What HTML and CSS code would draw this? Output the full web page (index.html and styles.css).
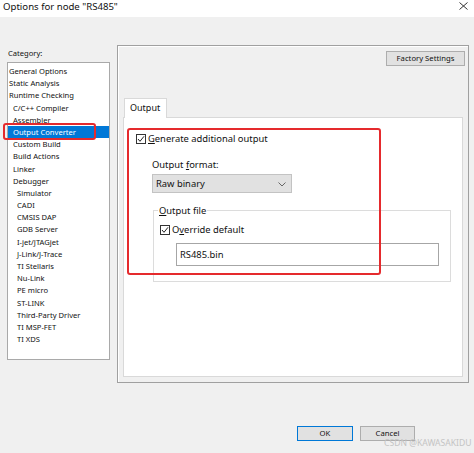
FILE: index.html
```html
<!DOCTYPE html>
<html>
<head>
<meta charset="utf-8">
<link rel="stylesheet" href="styles.css">
</head>
<body>
<div class="window">
  <div class="titlebar">
    <span class="title">Options for node "RS485"</span>
    <svg class="close" width="9" height="8" viewBox="0 0 9 8"><path d="M0.5 0.5 L8.5 7.5 M8.5 0.5 L0.5 7.5" stroke="#333" stroke-width="1" fill="none"/></svg>
  </div>
  <div class="dialog">
    <div class="main">
      <div class="left">
        <div class="cat-label">Category:</div>
        <div class="list">
          <div class="item l0">General Options</div>
          <div class="item l0">Static Analysis</div>
          <div class="item l0">Runtime Checking</div>
          <div class="item l1">C/C++ Compiler</div>
          <div class="item l1">Assembler</div>
          <div class="item l1 sel">Output Converter</div>
          <div class="item l1">Custom Build</div>
          <div class="item l1">Build Actions</div>
          <div class="item l1">Linker</div>
          <div class="item l1">Debugger</div>
          <div class="item l2">Simulator</div>
          <div class="item l2">CADI</div>
          <div class="item l2">CMSIS DAP</div>
          <div class="item l2">GDB Server</div>
          <div class="item l2">I-jet/JTAGjet</div>
          <div class="item l2">J-Link/J-Trace</div>
          <div class="item l2">TI Stellaris</div>
          <div class="item l2">Nu-Link</div>
          <div class="item l2">PE micro</div>
          <div class="item l2">ST-LINK</div>
          <div class="item l2">Third-Party Driver</div>
          <div class="item l2">TI MSP-FET</div>
          <div class="item l2">TI XDS</div>
          <div class="mark mark-list"></div>
        </div>
      </div>
      <div class="right">
        <div class="btn factory">Factory Settings</div>
        <div class="tabs">
          <div class="tab">Output</div>
        </div>
        <div class="tabpanel">
          <div class="check-row first">
            <svg class="cb" width="10" height="10" viewBox="0 0 10 10"><rect x="0.5" y="0.5" width="9" height="9" fill="#fff" stroke="#333"/><path d="M2 5 L4 7.3 L8 2.3" stroke="#222" stroke-width="1" fill="none"/></svg>
            <span><u>G</u>enerate additional output</span>
          </div>
          <div class="field-label">Output <u>f</u>ormat:</div>
          <div class="select">
            <span>Raw binary</span>
            <svg class="chev" width="8" height="5" viewBox="0 0 8 5"><path d="M0.5 0.5 L4 4 L7.5 0.5" stroke="#666" stroke-width="1" fill="none"/></svg>
          </div>
          <fieldset class="group">
            <legend><u>O</u>utput file</legend>
            <div class="check-row second">
              <svg class="cb" width="10" height="10" viewBox="0 0 10 10"><rect x="0.5" y="0.5" width="9" height="9" fill="#fff" stroke="#333"/><path d="M2 5 L4 7.3 L8 2.3" stroke="#222" stroke-width="1" fill="none"/></svg>
              <span>O<u>v</u>erride default</span>
            </div>
            <div class="textbox">RS485.bin</div>
          </fieldset>
          <div class="mark mark-panel"></div>
        </div>
      </div>
    </div>
    <div class="footer">
      <div class="btn ok">OK</div>
      <div class="btn cancel">Cancel</div>
    </div>
  </div>
  <div class="watermark">CSDN @KAWASAKIDU</div>
</div>
</body>
</html>
```

FILE: styles.css
```css
* { box-sizing: border-box; }
html, body { margin: 0; padding: 0; }
body {
  width: 474px;
  height: 453px;
  overflow: hidden;
  font-family: "Noto Sans", "Liberation Sans", sans-serif;
  color: #000;
  background: #fff;
}
.window {
  position: relative;
  width: 474px;
  height: 453px;
}
.titlebar {
  height: 17px;
  background: #fff;
  display: flex;
  justify-content: space-between;
  align-items: flex-start;
  padding-left: 3px;
}
.title {
  font-size: 9.6px;
  line-height: 14px;
  color: #111;
}
.close {
  margin-top: 2px;
  margin-right: 6px;
}
.dialog {
  height: 436px;
  background: #f0f0f0;
  padding: 28px 5px 0 7px;
}
.main {
  display: grid;
  grid-template-columns: 103px 352px;
  column-gap: 7px;
  align-items: start;
}
.cat-label {
  height: 17px;
  font-size: 7.6px;
  line-height: 17px;
  padding-left: 1px;
  color: #111;
}
.list {
  position: relative;
  height: 298px;
  background: #fff;
  border: 1px solid #a9a9a9;
  padding-top: 2px;
}
.item {
  font-size: 7.6px;
  line-height: 12.2px;
  height: 12.2px;
  white-space: nowrap;
  color: #111;
}
.item.l0 { padding-left: 1px; }
.item.l1 { padding-left: 5px; }
.item.l2 { padding-left: 9px; }
.item.sel {
  background: #0078d7;
  color: #fff;
}
.mark {
  position: absolute;
  border: 2px solid #e52a2d;
  border-radius: 3px;
  pointer-events: none;
}
.mark-list {
  left: -5px;
  top: 60px;
  width: 93px;
  height: 17px;
}
.right {
  height: 338px;
  border: 1px solid #a0a0a0;
  box-shadow: inset 1px 1px 0 #fff;
  padding: 5px;
  display: flex;
  flex-direction: column;
}
.btn {
  height: 15px;
  background: #e1e1e1;
  border: 1px solid #adadad;
  font-size: 7.7px;
  line-height: 13px;
  text-align: center;
  color: #111;
}
.factory {
  align-self: flex-end;
  width: 79px;
  margin-right: -2px;
}
.tabs {
  margin-top: 32px;
  display: flex;
  padding-left: 1px;
}
.tab {
  width: 43px;
  height: 20px;
  background: #fff;
  border: 1px solid #d9d9d9;
  border-bottom: none;
  font-size: 9px;
  line-height: 18px;
  padding-left: 5px;
  margin-bottom: -1px;
  position: relative;
  z-index: 1;
  color: #111;
}
.tabpanel {
  position: relative;
  flex: 1;
  background: #fff;
  border: 1px solid #d9d9d9;
  font-size: 9.4px;
  color: #111;
}
.check-row {
  display: flex;
  align-items: center;
  gap: 2px;
  height: 13px;
  line-height: 13px;
}
.check-row.first {
  margin-top: 14px;
  margin-left: 12px;
}
.field-label {
  margin-top: 13px;
  margin-left: 28px;
  line-height: 13px;
}
.select {
  margin-top: 3px;
  margin-left: 28px;
  width: 140px;
  height: 19px;
  background: #e1e1e1;
  border: 1px solid #c3c3c3;
  display: flex;
  align-items: center;
  justify-content: space-between;
  padding: 0 5px 0 3px;
  line-height: 17px;
}
.chev { margin-top: 1px; }
.group {
  margin: 11px 0 0 29px;
  width: 298px;
  border: 1px solid #dcdcdc;
  padding: 0 0 15px 0;
  min-width: 0;
}
.group legend {
  margin-left: 4px;
  padding: 0 1px;
  line-height: 13px;
}
.check-row.second {
  margin-top: 6px;
  margin-left: 6px;
}
.textbox {
  margin-top: 7px;
  margin-left: 22px;
  width: 263px;
  height: 23px;
  border: 1px solid #a6a6a6;
  background: #fff;
  padding-left: 3px;
  line-height: 21px;
}
.mark-panel {
  left: 3px;
  top: 10px;
  width: 254px;
  height: 147px;
}
.footer {
  margin-top: 43px;
  display: flex;
  justify-content: flex-end;
  gap: 7px;
  padding-right: 54px;
}
.ok {
  width: 56px;
  border-color: #0078d7;
}
.cancel {
  width: 55px;
}
.watermark {
  position: absolute;
  left: 384px;
  top: 437px;
  font-size: 8.6px;
  line-height: 12px;
  color: #c4c4c4;
  white-space: nowrap;
}
```
